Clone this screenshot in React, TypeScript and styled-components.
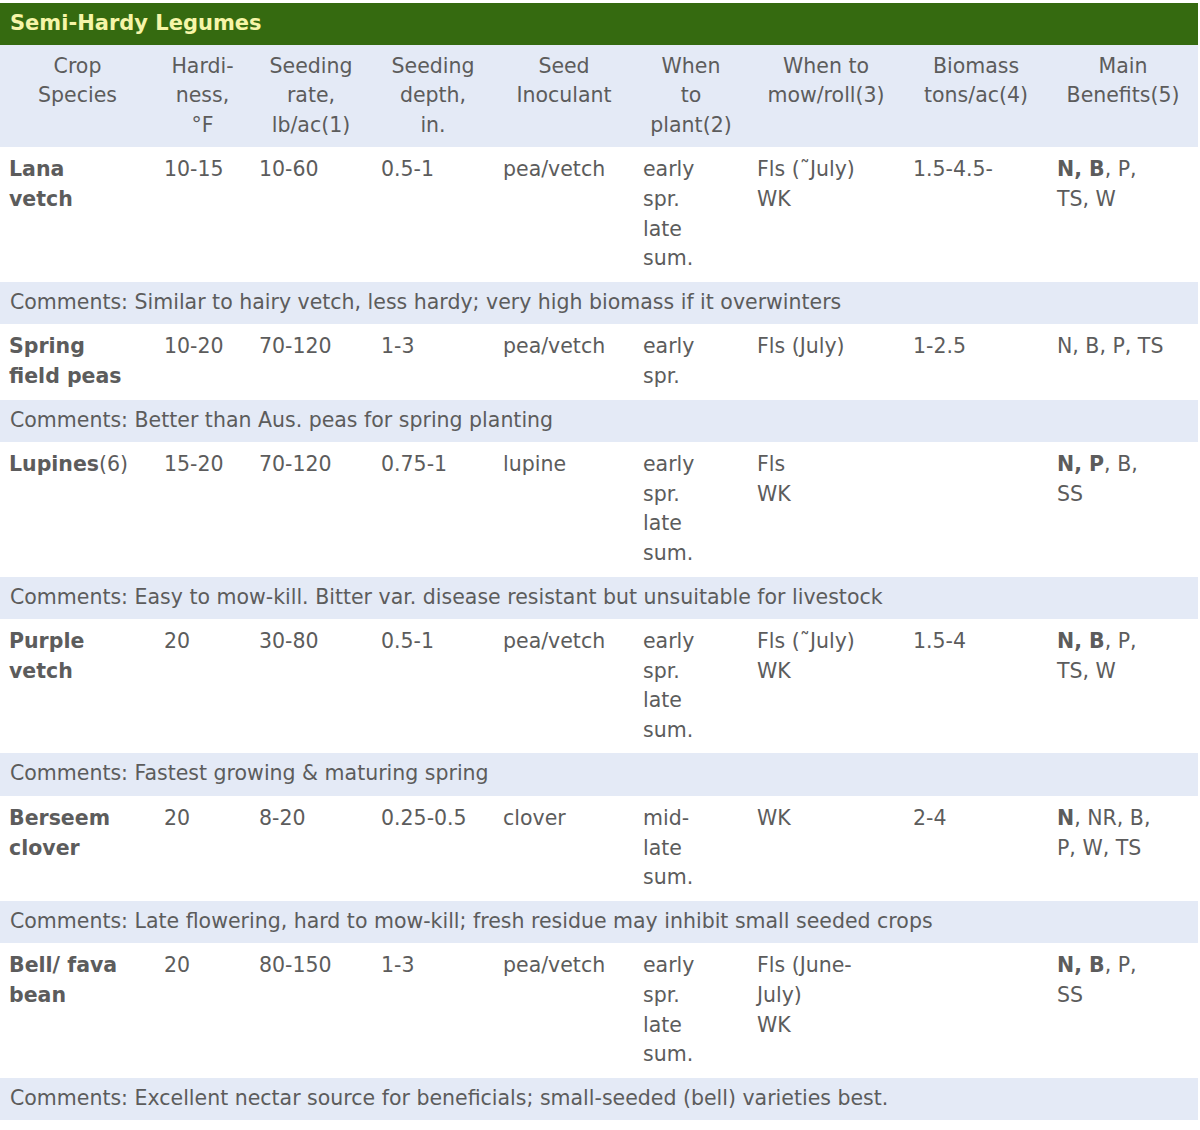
import React from 'react';
import styled, { createGlobalStyle } from 'styled-components';

const Global = createGlobalStyle`
  body { margin: 0; padding-top: 3px; background: #fff; font-family: "DejaVu Sans", "Liberation Sans", sans-serif; }
`;

const Table = styled.table`
  width: 1198px;
  border-collapse: collapse;
  table-layout: fixed;
  font-size: 20.5px;
  line-height: 29.6px;
  color: #5c5c5c;
`;

const Title = styled.th`
  background: #356a10;
  color: #f6f5a8;
  text-align: left;
  font-weight: 600;
  padding: 6px 10px 6px;
  font-size: 21px;
`;

const Head = styled.th`
  background: #e4eaf6;
  font-weight: normal;
  text-align: center;
  vertical-align: top;
  padding: 7px 4px;
`;

const Cell = styled.td<{ $bold?: boolean }>`
  vertical-align: top;
  padding: 8px 9px 7px;
  font-weight: ${p => (p.$bold ? 'bold' : 'normal')};
`;

const Comment = styled.td`
  background: #e4eaf6;
  padding: 6px 10px 7px;
  border-top: 1px solid #fff;
`;

const widths = [155, 95, 122, 122, 140, 114, 156, 144, 150];
const headers = [
  ['Crop', 'Species'], ['Hardi-', 'ness,', '°F'], ['Seeding', 'rate,', 'lb/ac(1)'],
  ['Seeding', 'depth,', 'in.'], ['Seed', 'Inoculant'], ['When', 'to', 'plant(2)'],
  ['When to', 'mow/roll(3)'], ['Biomass', 'tons/ac(4)'], ['Main', 'Benefits(5)'],
];

type Row = { name: React.ReactNode; cells: React.ReactNode[]; comment: string };

const lines = (...l: string[]) => l.map((s, i) => <React.Fragment key={i}>{i > 0 && <br />}{s}</React.Fragment>);

const rows: Row[] = [
  { name: lines('Lana', 'vetch'), cells: ['10-15', '10-60', '0.5-1', 'pea/vetch', lines('early', 'spr.', 'late', 'sum.'), lines('Fls (˜July)', 'WK'), '1.5-4.5-', <><b>N, B</b>, P,<br />TS, W</>], comment: 'Comments: Similar to hairy vetch, less hardy; very high biomass if it overwinters' },
  { name: lines('Spring', 'field peas'), cells: ['10-20', '70-120', '1-3', 'pea/vetch', lines('early', 'spr.'), 'Fls (July)', '1-2.5', 'N, B, P, TS'], comment: 'Comments: Better than Aus. peas for spring planting' },
  { name: <>Lupines<span style={{ fontWeight: 'normal' }}>(6)</span></>, cells: ['15-20', '70-120', '0.75-1', 'lupine', lines('early', 'spr.', 'late', 'sum.'), lines('Fls', 'WK'), '', <><b>N, P</b>, B,<br />SS</>], comment: 'Comments: Easy to mow-kill. Bitter var. disease resistant but unsuitable for livestock' },
  { name: lines('Purple', 'vetch'), cells: ['20', '30-80', '0.5-1', 'pea/vetch', lines('early', 'spr.', 'late', 'sum.'), lines('Fls (˜July)', 'WK'), '1.5-4', <><b>N, B</b>, P,<br />TS, W</>], comment: 'Comments: Fastest growing & maturing spring' },
  { name: lines('Berseem', 'clover'), cells: ['20', '8-20', '0.25-0.5', 'clover', lines('mid-', 'late', 'sum.'), 'WK', '2-4', <><b>N</b>, NR, B,<br />P, W, TS</>], comment: 'Comments: Late flowering, hard to mow-kill; fresh residue may inhibit small seeded crops' },
  { name: lines('Bell/ fava', 'bean'), cells: ['20', '80-150', '1-3', 'pea/vetch', lines('early', 'spr.', 'late', 'sum.'), lines('Fls (June-', 'July)', 'WK'), '', <><b>N, B</b>, P,<br />SS</>], comment: 'Comments: Excellent nectar source for beneficials; small-seeded (bell) varieties best.' },
];

export default function App() {
  return (
    <>
      <Global />
      <Table>
        <colgroup>{widths.map((w, i) => <col key={i} style={{ width: w }} />)}</colgroup>
        <thead>
          <tr><Title colSpan={9}>Semi-Hardy Legumes</Title></tr>
          <tr>{headers.map((h, i) => <Head key={i}>{lines(...h)}</Head>)}</tr>
        </thead>
        <tbody>
          {rows.map((r, i) => (
            <React.Fragment key={i}>
              <tr>
                <Cell $bold>{r.name}</Cell>
                {r.cells.map((c, j) => <Cell key={j}>{c}</Cell>)}
              </tr>
              <tr><Comment colSpan={9}>{r.comment}</Comment></tr>
            </React.Fragment>
          ))}
        </tbody>
      </Table>
    </>
  );
}
